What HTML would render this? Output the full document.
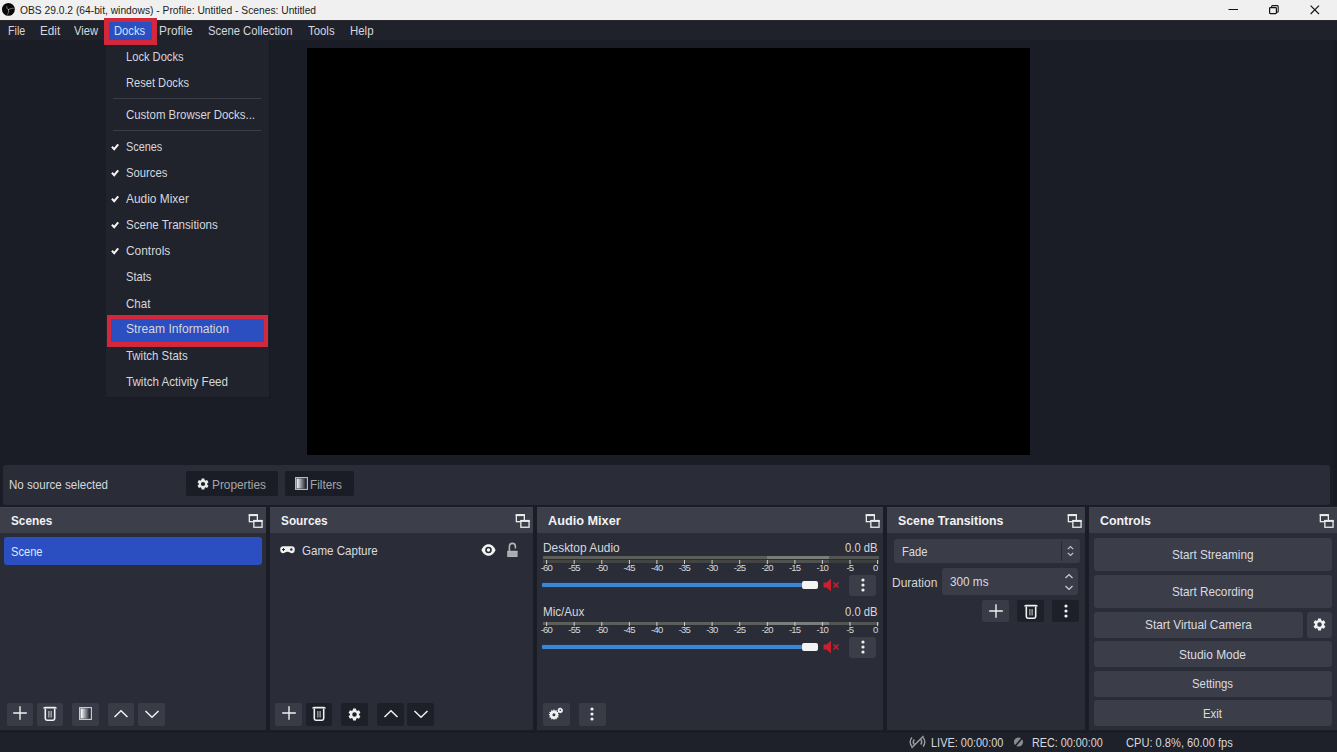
<!DOCTYPE html>
<html><head><meta charset="utf-8">
<style>
*{margin:0;padding:0;box-sizing:border-box}
html,body{width:1337px;height:752px;overflow:hidden;background:#1a1c26;font-family:"Liberation Sans",sans-serif}
.a{position:absolute}
.tx{position:absolute;white-space:nowrap;transform-origin:0 50%}
svg{position:absolute;overflow:visible}
</style></head><body>
<div class="a" style="left:0px;top:0px;width:1337px;height:20px;background:#f0f0f0;"></div>
<div class="a" style="left:0px;top:20px;width:1337px;height:20px;background:#20222b;"></div>
<div class="a" style="left:0px;top:19.5px;width:1337px;height:1px;background:#2a2a2e;"></div>
<div class="a" style="left:307px;top:48px;width:723px;height:406.5px;background:#000;"></div>
<div class="a" style="left:1333px;top:41px;width:4px;height:464px;background:#181a23;"></div>
<div class="a" style="left:3px;top:465px;width:1327px;height:39.5px;background:#2a2d38;border-radius:3px"></div>
<div class="a" style="left:0px;top:507px;width:266px;height:223px;background:#2a2d37;"></div>
<div class="a" style="left:0px;top:507px;width:266px;height:26px;background:#3c3f4a;border-top:1px solid #43454f"></div>
<div class="a" style="left:270px;top:507px;width:263px;height:223px;background:#2a2d37;"></div>
<div class="a" style="left:270px;top:507px;width:263px;height:26px;background:#3c3f4a;border-top:1px solid #43454f"></div>
<div class="a" style="left:537px;top:507px;width:346px;height:223px;background:#2a2d37;"></div>
<div class="a" style="left:537px;top:507px;width:346px;height:26px;background:#3c3f4a;border-top:1px solid #43454f"></div>
<div class="a" style="left:887px;top:507px;width:198px;height:223px;background:#2a2d37;"></div>
<div class="a" style="left:887px;top:507px;width:198px;height:26px;background:#3c3f4a;border-top:1px solid #43454f"></div>
<div class="a" style="left:1089px;top:507px;width:248px;height:223px;background:#2a2d37;"></div>
<div class="a" style="left:1089px;top:507px;width:248px;height:26px;background:#3c3f4a;border-top:1px solid #43454f"></div>
<div class="a" style="left:0px;top:733px;width:1337px;height:19px;background:#1f212a;"></div>
<svg style="left:2px;top:3px" width="14" height="14" viewBox="0 0 14 14"><circle cx="6.4" cy="6.4" r="6.4" fill="#080808"/><path d="M6.5 6.6C5.2 6 4.6 4.8 4.8 3.2M6.5 6.6C8.3 5.5 10 5.2 11.8 5.3M6.5 6.6C6.9 8.4 6.4 10.2 5.2 11.6" fill="none" stroke="#8a8a8a" stroke-width="0.9"/><circle cx="6.5" cy="6.6" r="0.7" fill="#bbb"/></svg>
<svg style="left:1228px;top:5px" width="12" height="10"><path d="M0.5 4.5H10" stroke="#111" stroke-width="1"/></svg>
<svg style="left:1269px;top:5px" width="12" height="10"><path d="M2.6 2.3V1.6a1 1 0 0 1 1-1H8.2a1 1 0 0 1 1 1V6.2a1 1 0 0 1-1 1H7.6" fill="none" stroke="#111" stroke-width="1.1"/><rect x="0.6" y="2.6" width="6.8" height="6" rx="0.8" fill="none" stroke="#111" stroke-width="1.2"/></svg>
<svg style="left:1310px;top:5px" width="10" height="10"><path d="M0.6 0.6L9 9M9 0.6L0.6 9" stroke="#151515" stroke-width="1.15"/></svg>
<div class="a" style="left:106px;top:40px;width:164px;height:358px;background:#17191f;"></div>
<div class="a" style="left:106px;top:40px;width:163px;height:357px;background:#20222c;"></div>
<div class="a" style="left:104px;top:18px;width:53px;height:27px;background:#d3283c;"></div>
<div class="a" style="left:109px;top:22px;width:43px;height:18px;background:#2b4ec0;"></div>
<div class="a" style="left:113px;top:98px;width:148px;height:1px;background:#3b3e49;"></div>
<div class="a" style="left:113px;top:130px;width:148px;height:1px;background:#3b3e49;"></div>
<div class="a" style="left:107px;top:315px;width:161px;height:32px;background:#d3283c;"></div>
<div class="a" style="left:111px;top:319px;width:153px;height:23px;background:#2b4ec0;"></div>
<svg style="left:111px;top:142.7px" width="9" height="8"><path d="M0.9 3.8L3.2 6.2L7.2 1.3" fill="none" stroke="#f2f2f2" stroke-width="2.1"/></svg>
<svg style="left:111px;top:168.7px" width="9" height="8"><path d="M0.9 3.8L3.2 6.2L7.2 1.3" fill="none" stroke="#f2f2f2" stroke-width="2.1"/></svg>
<svg style="left:111px;top:194.7px" width="9" height="8"><path d="M0.9 3.8L3.2 6.2L7.2 1.3" fill="none" stroke="#f2f2f2" stroke-width="2.1"/></svg>
<svg style="left:111px;top:220.7px" width="9" height="8"><path d="M0.9 3.8L3.2 6.2L7.2 1.3" fill="none" stroke="#f2f2f2" stroke-width="2.1"/></svg>
<svg style="left:111px;top:246.8px" width="9" height="8"><path d="M0.9 3.8L3.2 6.2L7.2 1.3" fill="none" stroke="#f2f2f2" stroke-width="2.1"/></svg>
<div class="a" style="left:186px;top:471px;width:92px;height:25px;background:#1b1d26;border-radius:2px"></div>
<div class="a" style="left:285px;top:471px;width:68.5px;height:25px;background:#1b1d26;border-radius:2px"></div>
<svg style="left:196px;top:477px" width="14" height="14" viewBox="0 0 24 24"><path fill="#e8e8e8" d="M19.14 12.94c.04-.3.06-.61.06-.94s-.02-.64-.07-.94l2.03-1.58a.49.49 0 0 0 .12-.61l-1.92-3.32a.49.49 0 0 0-.59-.22l-2.39.96c-.5-.38-1.03-.7-1.62-.94l-.36-2.54a.48.48 0 0 0-.48-.41h-3.84c-.24 0-.43.17-.47.41l-.36 2.54c-.59.24-1.13.57-1.62.94l-2.39-.96a.49.49 0 0 0-.59.22L2.74 8.87c-.12.21-.08.47.12.61l2.03 1.58c-.05.3-.09.63-.09.94s.02.64.07.94l-2.03 1.58a.49.49 0 0 0-.12.61l1.92 3.32c.12.22.37.29.59.22l2.39-.96c.5.38 1.03.7 1.62.94l.36 2.54c.05.24.24.41.48.41h3.84c.24 0 .44-.17.47-.41l.36-2.54c.59-.24 1.13-.56 1.62-.94l2.39.96c.22.08.47 0 .59-.22l1.92-3.32c.12-.22.07-.47-.12-.61l-2.01-1.58zM12 15.6A3.6 3.6 0 1 1 12 8.4a3.6 3.6 0 0 1 0 7.2z"/></svg>
<svg style="left:295px;top:477px" width="13" height="13"><defs><linearGradient id="fg" x1="0" x2="1"><stop offset="0.1" stop-color="#e4e4ec"/><stop offset="0.9" stop-color="#2a2c34"/></linearGradient></defs><rect x="1.5" y="1.5" width="10" height="10" fill="url(#fg)"/><rect x="0.6" y="0.6" width="11.8" height="11.8" fill="none" stroke="#bfc0c8" stroke-width="1.1"/></svg>
<svg style="left:248px;top:513px" width="16" height="16" viewBox="0 0 16 16"><rect x="1.35" y="1.75" width="8" height="6.9" fill="none" stroke="#ececec" stroke-width="1.3"/><path d="M0.7 2.3H10" stroke="#ececec" stroke-width="1.6"/><rect x="5.85" y="7.55" width="8.2" height="6.7" fill="#3c3f4a" stroke="#ececec" stroke-width="1.3"/><path d="M5.2 8.1H14.7" stroke="#ececec" stroke-width="1.6"/></svg>
<svg style="left:515px;top:513px" width="16" height="16" viewBox="0 0 16 16"><rect x="1.35" y="1.75" width="8" height="6.9" fill="none" stroke="#ececec" stroke-width="1.3"/><path d="M0.7 2.3H10" stroke="#ececec" stroke-width="1.6"/><rect x="5.85" y="7.55" width="8.2" height="6.7" fill="#3c3f4a" stroke="#ececec" stroke-width="1.3"/><path d="M5.2 8.1H14.7" stroke="#ececec" stroke-width="1.6"/></svg>
<svg style="left:865px;top:513px" width="16" height="16" viewBox="0 0 16 16"><rect x="1.35" y="1.75" width="8" height="6.9" fill="none" stroke="#ececec" stroke-width="1.3"/><path d="M0.7 2.3H10" stroke="#ececec" stroke-width="1.6"/><rect x="5.85" y="7.55" width="8.2" height="6.7" fill="#3c3f4a" stroke="#ececec" stroke-width="1.3"/><path d="M5.2 8.1H14.7" stroke="#ececec" stroke-width="1.6"/></svg>
<svg style="left:1067px;top:513px" width="16" height="16" viewBox="0 0 16 16"><rect x="1.35" y="1.75" width="8" height="6.9" fill="none" stroke="#ececec" stroke-width="1.3"/><path d="M0.7 2.3H10" stroke="#ececec" stroke-width="1.6"/><rect x="5.85" y="7.55" width="8.2" height="6.7" fill="#3c3f4a" stroke="#ececec" stroke-width="1.3"/><path d="M5.2 8.1H14.7" stroke="#ececec" stroke-width="1.6"/></svg>
<svg style="left:1319px;top:513px" width="16" height="16" viewBox="0 0 16 16"><rect x="1.35" y="1.75" width="8" height="6.9" fill="none" stroke="#ececec" stroke-width="1.3"/><path d="M0.7 2.3H10" stroke="#ececec" stroke-width="1.6"/><rect x="5.85" y="7.55" width="8.2" height="6.7" fill="#3c3f4a" stroke="#ececec" stroke-width="1.3"/><path d="M5.2 8.1H14.7" stroke="#ececec" stroke-width="1.6"/></svg>
<div class="a" style="left:4px;top:537px;width:258px;height:28px;background:#2b4ec0;border-radius:3px"></div>
<div class="a" style="left:7px;top:703px;width:26px;height:23px;background:#393c47;border-radius:2px"></div>
<svg style="left:12px;top:705px" width="16" height="16"><path d="M8 1.2V14.8M1.2 8H14.8" stroke="#f0f0f0" stroke-width="1.4"/></svg>
<div class="a" style="left:37px;top:703px;width:26px;height:23px;background:#393c47;border-radius:2px"></div>
<svg style="left:42px;top:706px" width="16" height="16"><path d="M1.9 2.6Q1.9 1.6 3 1.6H13Q14.1 1.6 14.1 2.6" fill="none" stroke="#f0f0f0" stroke-width="1.6"/><path d="M3.3 2.4V12.6a1.6 1.6 0 0 0 1.6 1.6H11.1a1.6 1.6 0 0 0 1.6-1.6V2.4" fill="none" stroke="#f0f0f0" stroke-width="1.6"/><path d="M6.9 5V11.5M9.1 5V11.5" stroke="#f0f0f0" stroke-width="1" opacity="0.85"/></svg>
<div class="a" style="left:72px;top:703px;width:27px;height:23px;background:#393c47;border-radius:2px"></div>
<svg style="left:79.0px;top:707px" width="14" height="14"><defs><linearGradient id="fg2" x1="0" x2="1"><stop offset="0.1" stop-color="#f0f0f4"/><stop offset="0.9" stop-color="#2a2c34"/></linearGradient></defs><rect x="1.5" y="1.5" width="10" height="10" fill="url(#fg2)"/><rect x="0.6" y="0.6" width="11.8" height="11.8" fill="none" stroke="#d0d0d6" stroke-width="1.1"/></svg>
<div class="a" style="left:108px;top:703px;width:26px;height:23px;background:#393c47;border-radius:2px"></div>
<svg style="left:113px;top:706px" width="16" height="16"><path d="M1.5 11L8 4.8L14.5 11" fill="none" stroke="#f0f0f0" stroke-width="1.5"/></svg>
<div class="a" style="left:138px;top:703px;width:27px;height:23px;background:#393c47;border-radius:2px"></div>
<svg style="left:143.5px;top:706px" width="16" height="16"><path d="M1.5 5L8 11.2L14.5 5" fill="none" stroke="#f0f0f0" stroke-width="1.5"/></svg>
<div class="a" style="left:275px;top:703px;width:27px;height:23px;background:#393c47;border-radius:2px"></div>
<svg style="left:280.5px;top:705px" width="16" height="16"><path d="M8 1.2V14.8M1.2 8H14.8" stroke="#f0f0f0" stroke-width="1.4"/></svg>
<div class="a" style="left:306px;top:703px;width:26px;height:23px;background:#1e2029;border-radius:2px"></div>
<svg style="left:311px;top:706px" width="16" height="16"><path d="M1.9 2.6Q1.9 1.6 3 1.6H13Q14.1 1.6 14.1 2.6" fill="none" stroke="#f0f0f0" stroke-width="1.6"/><path d="M3.3 2.4V12.6a1.6 1.6 0 0 0 1.6 1.6H11.1a1.6 1.6 0 0 0 1.6-1.6V2.4" fill="none" stroke="#f0f0f0" stroke-width="1.6"/><path d="M6.9 5V11.5M9.1 5V11.5" stroke="#f0f0f0" stroke-width="1" opacity="0.85"/></svg>
<div class="a" style="left:341px;top:703px;width:27px;height:23px;background:#1e2029;border-radius:2px"></div>
<svg style="left:347.0px;top:706.5px" width="15" height="15" viewBox="0 0 24 24"><path fill="#f0f0f0" d="M19.14 12.94c.04-.3.06-.61.06-.94s-.02-.64-.07-.94l2.03-1.58a.49.49 0 0 0 .12-.61l-1.92-3.32a.49.49 0 0 0-.59-.22l-2.39.96c-.5-.38-1.03-.7-1.62-.94l-.36-2.54a.48.48 0 0 0-.48-.41h-3.84c-.24 0-.43.17-.47.41l-.36 2.54c-.59.24-1.130.57-1.62.94l-2.39-.96a.49.49 0 0 0-.59.22L2.74 8.87c-.12.21-.08.47.12.61l2.03 1.58c-.05.3-.09.63-.09.94s.02.64.07.94l-2.03 1.58a.49.49 0 0 0-.12.61l1.920 3.32c.12.22.37.29.59.22l2.39-.96c.5.38 1.03.7 1.62.94l.36 2.54c.05.24.24.41.48.41h3.84c.24 0 .44-.17.47-.41l.36-2.54c.59-.24 1.13-.56 1.62-.94l2.39.96c.22.08.47 0 .59-.22l1.92-3.32c.12-.22.07-.47-.12-.61l-2.010-1.58zM12 15.6A3.6 3.6 0 1 1 12 8.4a3.6 3.6 0 0 1 0 7.2z"/></svg>
<div class="a" style="left:377px;top:703px;width:27px;height:23px;background:#1e2029;border-radius:2px"></div>
<svg style="left:382.5px;top:706px" width="16" height="16"><path d="M1.5 11L8 4.8L14.5 11" fill="none" stroke="#f0f0f0" stroke-width="1.5"/></svg>
<div class="a" style="left:407px;top:703px;width:27px;height:23px;background:#1e2029;border-radius:2px"></div>
<svg style="left:412.5px;top:706px" width="16" height="16"><path d="M1.5 5L8 11.2L14.5 5" fill="none" stroke="#f0f0f0" stroke-width="1.5"/></svg>
<svg style="left:280px;top:546px" width="15" height="8" viewBox="0 0 15 8"><path d="M3.4 0.2H11.6A3.3 3.3 0 0 1 14.8 3.8C14.8 6 13.6 7.3 12 7.3C10.4 7.3 9.6 5.8 7.5 5.8S4.6 7.3 3 7.3C1.4 7.3 0.2 6 0.2 3.8A3.3 3.3 0 0 1 3.4 0.2Z" fill="#f0f0f0"/><path d="M2 3.5H5M3.5 2V5" stroke="#292c36" stroke-width="1"/><circle cx="11.3" cy="3.5" r="1.2" fill="#292c36"/></svg>
<svg style="left:480.5px;top:544px" width="15" height="12" viewBox="0 0 15 12"><path d="M0.4 6C2.4 1.6 5 0.3 7.5 0.3S12.6 1.6 14.6 6C12.6 10.4 10 11.7 7.5 11.7S2.4 10.4 0.4 6Z" fill="#f4f4f4"/><circle cx="7.5" cy="6" r="3.3" fill="#292c36"/><circle cx="7.5" cy="6" r="1.7" fill="#f4f4f4"/></svg>
<svg style="left:507px;top:542px" width="12" height="16" viewBox="0 0 12 16"><path d="M2.4 9V4.4A3 3 0 0 1 8.4 4.4V6.6" fill="none" stroke="#b4b4b8" stroke-width="1.6"/><rect x="0.2" y="8.7" width="10.4" height="6.3" rx="0.6" fill="#b4b4b8"/><path d="M0.5 11.2H10.3M0.5 13H10.3" stroke="#9a9a9e" stroke-width="0.6"/></svg>
<div class="a" style="left:543px;top:556px;width:224.0px;height:3px;background:#5c5e5a;"></div>
<div class="a" style="left:767.0px;top:556px;width:61.60000000000002px;height:3px;background:#7b7d78;"></div>
<div class="a" style="left:828.6px;top:556px;width:50.39999999999998px;height:3px;background:#535553;"></div>
<div class="a" style="left:543px;top:560px;width:224.0px;height:3px;background:#434542;"></div>
<div class="a" style="left:767.0px;top:560px;width:61.60000000000002px;height:3px;background:#50524f;"></div>
<div class="a" style="left:828.6px;top:560px;width:50.39999999999998px;height:3px;background:#3c3e3e;"></div>
<svg style="left:543px;top:560px" width="342" height="6"><path d="M3.6 0V4" stroke="#d0d0d0" stroke-width="1"/><path d="M31.2 0V4" stroke="#d0d0d0" stroke-width="1"/><path d="M58.8 0V4" stroke="#d0d0d0" stroke-width="1"/><path d="M86.4 0V4" stroke="#d0d0d0" stroke-width="1"/><path d="M113.9 0V4" stroke="#d0d0d0" stroke-width="1"/><path d="M141.5 0V4" stroke="#d0d0d0" stroke-width="1"/><path d="M169.1 0V4" stroke="#d0d0d0" stroke-width="1"/><path d="M196.7 0V4" stroke="#d0d0d0" stroke-width="1"/><path d="M224.3 0V4" stroke="#d0d0d0" stroke-width="1"/><path d="M251.9 0V4" stroke="#d0d0d0" stroke-width="1"/><path d="M279.4 0V4" stroke="#d0d0d0" stroke-width="1"/><path d="M307.0 0V4" stroke="#d0d0d0" stroke-width="1"/><path d="M334.6 0V4" stroke="#d0d0d0" stroke-width="1"/></svg>
<div class="a" style="left:542px;top:583px;width:260px;height:4px;background:#3f86d2;box-shadow:0 0 0 1px #1f3550;border-radius:1px"></div>
<div class="a" style="left:802px;top:581px;width:16px;height:8px;background:#f4f4f4;border-radius:2px"></div>
<svg style="left:823px;top:578px" width="17" height="14" viewBox="0 0 17 14"><path d="M0.5 4.5H3.5L8 0.8V13.2L3.5 9.5H0.5Z" fill="#c8202e"/><path d="M10.5 4.5L15.5 9.5M15.5 4.5L10.5 9.5" stroke="#c8202e" stroke-width="1.5"/></svg>
<div class="a" style="left:849px;top:575px;width:27px;height:21px;background:#3b3e49;border-radius:3px"></div>
<svg style="left:859.7px;top:576.6px" width="6" height="16"><circle cx="3" cy="3" r="1.6" fill="#f0f0f0"/><circle cx="3" cy="8" r="1.6" fill="#f0f0f0"/><circle cx="3" cy="13" r="1.6" fill="#f0f0f0"/></svg>
<div class="a" style="left:543px;top:621.7px;width:224.0px;height:3px;background:#5c5e5a;"></div>
<div class="a" style="left:767.0px;top:621.7px;width:61.60000000000002px;height:3px;background:#7b7d78;"></div>
<div class="a" style="left:828.6px;top:621.7px;width:50.39999999999998px;height:3px;background:#535553;"></div>
<svg style="left:543px;top:622px" width="342" height="6"><path d="M3.6 0V4" stroke="#d0d0d0" stroke-width="1"/><path d="M31.2 0V4" stroke="#d0d0d0" stroke-width="1"/><path d="M58.8 0V4" stroke="#d0d0d0" stroke-width="1"/><path d="M86.4 0V4" stroke="#d0d0d0" stroke-width="1"/><path d="M113.9 0V4" stroke="#d0d0d0" stroke-width="1"/><path d="M141.5 0V4" stroke="#d0d0d0" stroke-width="1"/><path d="M169.1 0V4" stroke="#d0d0d0" stroke-width="1"/><path d="M196.7 0V4" stroke="#d0d0d0" stroke-width="1"/><path d="M224.3 0V4" stroke="#d0d0d0" stroke-width="1"/><path d="M251.9 0V4" stroke="#d0d0d0" stroke-width="1"/><path d="M279.4 0V4" stroke="#d0d0d0" stroke-width="1"/><path d="M307.0 0V4" stroke="#d0d0d0" stroke-width="1"/><path d="M334.6 0V4" stroke="#d0d0d0" stroke-width="1"/></svg>
<div class="a" style="left:542px;top:645px;width:260px;height:4px;background:#3f86d2;box-shadow:0 0 0 1px #1f3550;border-radius:1px"></div>
<div class="a" style="left:802px;top:643px;width:16px;height:8px;background:#f4f4f4;border-radius:2px"></div>
<svg style="left:823px;top:640px" width="17" height="14" viewBox="0 0 17 14"><path d="M0.5 4.5H3.5L8 0.8V13.2L3.5 9.5H0.5Z" fill="#c8202e"/><path d="M10.5 4.5L15.5 9.5M15.5 4.5L10.5 9.5" stroke="#c8202e" stroke-width="1.5"/></svg>
<div class="a" style="left:849px;top:637px;width:27px;height:21px;background:#3b3e49;border-radius:3px"></div>
<svg style="left:859.7px;top:638.6px" width="6" height="16"><circle cx="3" cy="3" r="1.6" fill="#f0f0f0"/><circle cx="3" cy="8" r="1.6" fill="#f0f0f0"/><circle cx="3" cy="13" r="1.6" fill="#f0f0f0"/></svg>
<div class="a" style="left:543px;top:703px;width:27px;height:23px;background:#393c47;border-radius:2px"></div>
<svg style="left:548px;top:706px" width="17" height="17" viewBox="0 0 17 17"><g fill="#f0f0f0"><path d="M6.5 4.6l.9.2.5-.8 1 .6-.3.9.6.6.9-.3.6 1-.8.5.2.9h.9v1.1h-.9l-.2.9.8.5-.6 1-.9-.3-.6.6.3.9-1 .6-.5-.8-.9.2v.9H5.4v-.9l-.9-.2-.5.8-1-.6.3-.9-.6-.6-.9.3-.6-1 .8-.5-.2-.9H.9V8.1h.9l.2-.9-.8-.5.6-1 .9.3.6-.6-.3-.9 1-.6.5.8.9-.2v-.9h1.1z"/></g><circle cx="5.95" cy="8.65" r="1.5" fill="#363a45"/><g fill="#f0f0f0"><path d="M12.6 2.2l.5.1.3-.4.6.3-.2.5.3.3.5-.2.3.6-.4.3.1.5h.5v.6h-.5l-.1.5.4.3-.3.6-.5-.2-.3.3.2.5-.6.3-.3-.4-.5.1v.5H12v-.5l-.5-.1-.3.4-.6-.3.2-.5-.3-.3-.5.2-.3-.6.4-.3-.1-.5h-.5V4h.5l.1-.5-.4-.3.3-.6.5.2.3-.3-.2-.5.6-.3.3.4.5-.1v-.5h.6z"/></g><circle cx="12.3" cy="4.3" r="0.8" fill="#363a45"/></svg>
<div class="a" style="left:579px;top:703px;width:27px;height:23px;background:#393c47;border-radius:2px"></div>
<svg style="left:588.7px;top:706px" width="6" height="16"><circle cx="3" cy="3" r="1.6" fill="#f0f0f0"/><circle cx="3" cy="8" r="1.6" fill="#f0f0f0"/><circle cx="3" cy="13" r="1.6" fill="#f0f0f0"/></svg>
<div class="a" style="left:894px;top:539px;width:186px;height:24px;background:#3a3d48;border-radius:3px"></div>
<div class="a" style="left:1061px;top:541px;width:1px;height:20px;background:#272a33;"></div>
<svg style="left:1066px;top:545px" width="9" height="12"><path d="M1.8 4.2L4.5 1.5L7.2 4.2M1.8 7.8L4.5 10.5L7.2 7.8" fill="none" stroke="#c4c4c8" stroke-width="1.2"/></svg>
<div class="a" style="left:942px;top:568px;width:136px;height:27px;background:#3a3d48;border-radius:3px"></div>
<svg style="left:1064px;top:572px" width="10" height="20"><path d="M1.5 6L5 2.5L8.5 6M1.5 14L5 17.5L8.5 14" fill="none" stroke="#d0d0d4" stroke-width="1.2"/></svg>
<div class="a" style="left:982px;top:600px;width:27px;height:22px;background:#393c47;border-radius:2px"></div>
<svg style="left:987.5px;top:603px" width="16" height="16"><path d="M8 1.2V14.8M1.2 8H14.8" stroke="#f0f0f0" stroke-width="1.4"/></svg>
<div class="a" style="left:1017px;top:600px;width:27px;height:22px;background:#1e2029;border-radius:2px"></div>
<svg style="left:1022.5px;top:603.8px" width="16" height="16"><path d="M1.9 2.6Q1.9 1.6 3 1.6H13Q14.1 1.6 14.1 2.6" fill="none" stroke="#f0f0f0" stroke-width="1.6"/><path d="M3.3 2.4V12.6a1.6 1.6 0 0 0 1.6 1.6H11.1a1.6 1.6 0 0 0 1.6-1.6V2.4" fill="none" stroke="#f0f0f0" stroke-width="1.6"/><path d="M6.9 5V11.5M9.1 5V11.5" stroke="#f0f0f0" stroke-width="1" opacity="0.85"/></svg>
<div class="a" style="left:1052px;top:600px;width:27px;height:22px;background:#1e2029;border-radius:2px"></div>
<svg style="left:1062.5px;top:603px" width="6" height="16"><circle cx="3" cy="3" r="1.6" fill="#f0f0f0"/><circle cx="3" cy="8" r="1.6" fill="#f0f0f0"/><circle cx="3" cy="13" r="1.6" fill="#f0f0f0"/></svg>
<div class="a" style="left:1093.5px;top:537.5px;width:238.5px;height:33.5px;background:#3b3e49;border-radius:3px"></div>
<div class="a" style="left:1093.5px;top:574.5px;width:238.5px;height:33.5px;background:#3b3e49;border-radius:3px"></div>
<div class="a" style="left:1093.5px;top:641px;width:238.5px;height:26px;background:#3b3e49;border-radius:3px"></div>
<div class="a" style="left:1093.5px;top:670.5px;width:238.5px;height:26px;background:#3b3e49;border-radius:3px"></div>
<div class="a" style="left:1093.5px;top:700px;width:238.5px;height:26px;background:#3b3e49;border-radius:3px"></div>
<div class="a" style="left:1093.5px;top:611.5px;width:209.5px;height:26px;background:#3b3e49;border-radius:3px"></div>
<div class="a" style="left:1306.5px;top:611.5px;width:25.5px;height:26px;background:#3b3e49;border-radius:3px"></div>
<svg style="left:1312.0px;top:617.0px" width="15" height="15" viewBox="0 0 24 24"><path fill="#f0f0f0" d="M19.14 12.94c.04-.3.06-.61.06-.94s-.02-.64-.07-.94l2.03-1.58a.49.49 0 0 0 .12-.61l-1.92-3.32a.49.49 0 0 0-.59-.22l-2.39.96c-.5-.38-1.03-.7-1.62-.94l-.36-2.54a.48.48 0 0 0-.48-.41h-3.84c-.24 0-.43.17-.47.41l-.36 2.54c-.59.24-1.130.57-1.62.94l-2.39-.96a.49.49 0 0 0-.59.22L2.74 8.87c-.12.21-.08.47.12.61l2.03 1.58c-.05.3-.09.63-.09.94s.02.64.07.94l-2.03 1.58a.49.49 0 0 0-.12.61l1.920 3.32c.12.22.37.29.59.22l2.39-.96c.5.38 1.03.7 1.62.94l.36 2.54c.05.24.24.41.48.41h3.84c.24 0 .44-.17.47-.41l.36-2.54c.59-.24 1.13-.56 1.62-.94l2.39.96c.22.08.47 0 .59-.22l1.92-3.32c.12-.22.07-.47-.12-.61l-2.010-1.58zM12 15.6A3.6 3.6 0 1 1 12 8.4a3.6 3.6 0 0 1 0 7.2z"/></svg>
<svg style="left:908px;top:735px" width="19" height="14" viewBox="0 0 19 14"><g fill="none" stroke="#9c9ca2" stroke-width="1.4"><path d="M4 2.5A6.5 6.5 0 0 0 4 11.5M15 2.5A6.5 6.5 0 0 1 15 11.5M6.3 4.5A3.8 3.8 0 0 0 6.3 9.5M12.7 4.5A3.8 3.8 0 0 1 12.7 9.5"/><path d="M3.5 13L15.5 1"/></g></svg>
<svg style="left:1013px;top:736px" width="11" height="12" viewBox="0 0 11 12"><circle cx="5.5" cy="6" r="4.6" fill="#8a8a90"/><path d="M1 11.5L10.5 0.5" stroke="#1c1e28" stroke-width="1.6"/></svg>
<span class="tx" id="t0" style="left:20.0px;top:3.89px;font-size:11px;line-height:13px;color:#1b1b1b;transform:scaleX(0.933);">OBS 29.0.2 (64-bit, windows) - Profile: Untitled - Scenes: Untitled</span>
<span class="tx" id="t1" style="left:7.5px;top:23.00px;font-size:13px;line-height:15px;color:#d6d7de;transform:scaleX(0.821);">File</span>
<span class="tx" id="t2" style="left:39.6px;top:23.00px;font-size:13px;line-height:15px;color:#d6d7de;transform:scaleX(0.902);">Edit</span>
<span class="tx" id="t3" style="left:74.0px;top:23.00px;font-size:13px;line-height:15px;color:#d6d7de;transform:scaleX(0.859);">View</span>
<span class="tx" id="t4" style="left:113.7px;top:23.00px;font-size:13px;line-height:15px;color:#cfe0ff;transform:scaleX(0.861);">Docks</span>
<span class="tx" id="t5" style="left:159.3px;top:23.00px;font-size:13px;line-height:15px;color:#d6d7de;transform:scaleX(0.914);">Profile</span>
<span class="tx" id="t6" style="left:207.8px;top:23.00px;font-size:13px;line-height:15px;color:#d6d7de;transform:scaleX(0.867);">Scene Collection</span>
<span class="tx" id="t7" style="left:307.7px;top:23.00px;font-size:13px;line-height:15px;color:#d6d7de;transform:scaleX(0.876);">Tools</span>
<span class="tx" id="t8" style="left:350.0px;top:23.00px;font-size:13px;line-height:15px;color:#d6d7de;transform:scaleX(0.879);">Help</span>
<span class="tx" id="t9" style="left:126.0px;top:49.10px;font-size:13px;line-height:15px;color:#d6d7dc;transform:scaleX(0.856);">Lock Docks</span>
<span class="tx" id="t10" style="left:126.0px;top:74.60px;font-size:13px;line-height:15px;color:#d6d7dc;transform:scaleX(0.855);">Reset Docks</span>
<span class="tx" id="t11" style="left:126.0px;top:107.30px;font-size:13px;line-height:15px;color:#d6d7dc;transform:scaleX(0.880);">Custom Browser Docks...</span>
<span class="tx" id="t12" style="left:126.0px;top:138.90px;font-size:13px;line-height:15px;color:#d6d7dc;transform:scaleX(0.837);">Scenes</span>
<span class="tx" id="t13" style="left:126.0px;top:164.90px;font-size:13px;line-height:15px;color:#d6d7dc;transform:scaleX(0.866);">Sources</span>
<span class="tx" id="t14" style="left:126.0px;top:190.90px;font-size:13px;line-height:15px;color:#d6d7dc;transform:scaleX(0.916);">Audio Mixer</span>
<span class="tx" id="t15" style="left:126.0px;top:216.90px;font-size:13px;line-height:15px;color:#d6d7dc;transform:scaleX(0.888);">Scene Transitions</span>
<span class="tx" id="t16" style="left:126.0px;top:243.00px;font-size:13px;line-height:15px;color:#d6d7dc;transform:scaleX(0.915);">Controls</span>
<span class="tx" id="t17" style="left:126.0px;top:269.00px;font-size:13px;line-height:15px;color:#d6d7dc;transform:scaleX(0.857);">Stats</span>
<span class="tx" id="t18" style="left:126.0px;top:295.50px;font-size:13px;line-height:15px;color:#d6d7dc;transform:scaleX(0.888);">Chat</span>
<span class="tx" id="t19" style="left:126.0px;top:321.40px;font-size:13px;line-height:15px;color:#d6d7dc;transform:scaleX(0.932);">Stream Information</span>
<span class="tx" id="t20" style="left:126.0px;top:347.60px;font-size:13px;line-height:15px;color:#d6d7dc;transform:scaleX(0.880);">Twitch Stats</span>
<span class="tx" id="t21" style="left:126.0px;top:373.60px;font-size:13px;line-height:15px;color:#d6d7dc;transform:scaleX(0.894);">Twitch Activity Feed</span>
<span class="tx" id="t22" style="left:9.0px;top:477.00px;font-size:13px;line-height:15px;color:#d6d7dc;transform:scaleX(0.890);">No source selected</span>
<span class="tx" id="t23" style="left:212.0px;top:477.00px;font-size:13px;line-height:15px;color:#a4a5ab;transform:scaleX(0.911);">Properties</span>
<span class="tx" id="t24" style="left:310.0px;top:477.00px;font-size:13px;line-height:15px;color:#a4a5ab;transform:scaleX(0.904);">Filters</span>
<span class="tx" id="t25" style="left:10.5px;top:513.00px;font-size:13px;line-height:15px;color:#f2f2f4;font-weight:700;transform:scaleX(0.907);">Scenes</span>
<span class="tx" id="t26" style="left:280.5px;top:513.00px;font-size:13px;line-height:15px;color:#f2f2f4;font-weight:700;transform:scaleX(0.910);">Sources</span>
<span class="tx" id="t27" style="left:547.5px;top:513.00px;font-size:13px;line-height:15px;color:#f2f2f4;font-weight:700;transform:scaleX(0.977);">Audio Mixer</span>
<span class="tx" id="t28" style="left:897.5px;top:513.00px;font-size:13px;line-height:15px;color:#f2f2f4;font-weight:700;transform:scaleX(0.948);">Scene Transitions</span>
<span class="tx" id="t29" style="left:1099.5px;top:513.00px;font-size:13px;line-height:15px;color:#f2f2f4;font-weight:700;transform:scaleX(0.954);">Controls</span>
<span class="tx" id="t30" style="left:11.0px;top:544.00px;font-size:13px;line-height:15px;color:#dfe6ff;transform:scaleX(0.854);">Scene</span>
<span class="tx" id="t31" style="left:301.5px;top:542.70px;font-size:13px;line-height:15px;color:#dadbe0;transform:scaleX(0.889);">Game Capture</span>
<span class="tx" id="t32" style="left:542.5px;top:540.00px;font-size:13px;line-height:15px;color:#d6d7dc;transform:scaleX(0.914);">Desktop Audio</span>
<span class="tx" id="t33" style="left:845.0px;top:540.00px;font-size:13px;line-height:15px;color:#d6d7dc;transform:scaleX(0.867);">0.0 dB</span>
<span class="tx" id="t34" style="left:540.7px;top:562.16px;font-size:9.5px;line-height:11.5px;color:#d8d8d8;letter-spacing:-0.8px;">-60</span>
<span class="tx" id="t35" style="left:568.3px;top:562.16px;font-size:9.5px;line-height:11.5px;color:#d8d8d8;letter-spacing:-0.8px;">-55</span>
<span class="tx" id="t36" style="left:595.9px;top:562.16px;font-size:9.5px;line-height:11.5px;color:#d8d8d8;letter-spacing:-0.8px;">-50</span>
<span class="tx" id="t37" style="left:623.5px;top:562.16px;font-size:9.5px;line-height:11.5px;color:#d8d8d8;letter-spacing:-0.8px;">-45</span>
<span class="tx" id="t38" style="left:651.1px;top:562.16px;font-size:9.5px;line-height:11.5px;color:#d8d8d8;letter-spacing:-0.8px;">-40</span>
<span class="tx" id="t39" style="left:678.7px;top:562.16px;font-size:9.5px;line-height:11.5px;color:#d8d8d8;letter-spacing:-0.8px;">-35</span>
<span class="tx" id="t40" style="left:706.2px;top:562.16px;font-size:9.5px;line-height:11.5px;color:#d8d8d8;letter-spacing:-0.8px;">-30</span>
<span class="tx" id="t41" style="left:733.8px;top:562.16px;font-size:9.5px;line-height:11.5px;color:#d8d8d8;letter-spacing:-0.8px;">-25</span>
<span class="tx" id="t42" style="left:761.4px;top:562.16px;font-size:9.5px;line-height:11.5px;color:#d8d8d8;letter-spacing:-0.8px;">-20</span>
<span class="tx" id="t43" style="left:789.0px;top:562.16px;font-size:9.5px;line-height:11.5px;color:#d8d8d8;letter-spacing:-0.8px;">-15</span>
<span class="tx" id="t44" style="left:816.6px;top:562.16px;font-size:9.5px;line-height:11.5px;color:#d8d8d8;letter-spacing:-0.8px;">-10</span>
<span class="tx" id="t45" style="left:846.4px;top:562.16px;font-size:9.5px;line-height:11.5px;color:#d8d8d8;letter-spacing:-0.8px;">-5</span>
<span class="tx" id="t46" style="left:872.9px;top:562.16px;font-size:9.5px;line-height:11.5px;color:#d8d8d8;letter-spacing:-0.8px;">0</span>
<span class="tx" id="t47" style="left:542.5px;top:603.80px;font-size:13px;line-height:15px;color:#d6d7dc;transform:scaleX(0.895);">Mic/Aux</span>
<span class="tx" id="t48" style="left:845.0px;top:603.80px;font-size:13px;line-height:15px;color:#d6d7dc;transform:scaleX(0.867);">0.0 dB</span>
<span class="tx" id="t49" style="left:540.7px;top:624.16px;font-size:9.5px;line-height:11.5px;color:#d8d8d8;letter-spacing:-0.8px;">-60</span>
<span class="tx" id="t50" style="left:568.3px;top:624.16px;font-size:9.5px;line-height:11.5px;color:#d8d8d8;letter-spacing:-0.8px;">-55</span>
<span class="tx" id="t51" style="left:595.9px;top:624.16px;font-size:9.5px;line-height:11.5px;color:#d8d8d8;letter-spacing:-0.8px;">-50</span>
<span class="tx" id="t52" style="left:623.5px;top:624.16px;font-size:9.5px;line-height:11.5px;color:#d8d8d8;letter-spacing:-0.8px;">-45</span>
<span class="tx" id="t53" style="left:651.1px;top:624.16px;font-size:9.5px;line-height:11.5px;color:#d8d8d8;letter-spacing:-0.8px;">-40</span>
<span class="tx" id="t54" style="left:678.7px;top:624.16px;font-size:9.5px;line-height:11.5px;color:#d8d8d8;letter-spacing:-0.8px;">-35</span>
<span class="tx" id="t55" style="left:706.2px;top:624.16px;font-size:9.5px;line-height:11.5px;color:#d8d8d8;letter-spacing:-0.8px;">-30</span>
<span class="tx" id="t56" style="left:733.8px;top:624.16px;font-size:9.5px;line-height:11.5px;color:#d8d8d8;letter-spacing:-0.8px;">-25</span>
<span class="tx" id="t57" style="left:761.4px;top:624.16px;font-size:9.5px;line-height:11.5px;color:#d8d8d8;letter-spacing:-0.8px;">-20</span>
<span class="tx" id="t58" style="left:789.0px;top:624.16px;font-size:9.5px;line-height:11.5px;color:#d8d8d8;letter-spacing:-0.8px;">-15</span>
<span class="tx" id="t59" style="left:816.6px;top:624.16px;font-size:9.5px;line-height:11.5px;color:#d8d8d8;letter-spacing:-0.8px;">-10</span>
<span class="tx" id="t60" style="left:846.4px;top:624.16px;font-size:9.5px;line-height:11.5px;color:#d8d8d8;letter-spacing:-0.8px;">-5</span>
<span class="tx" id="t61" style="left:872.9px;top:624.16px;font-size:9.5px;line-height:11.5px;color:#d8d8d8;letter-spacing:-0.8px;">0</span>
<span class="tx" id="t62" style="left:902.0px;top:543.80px;font-size:13px;line-height:15px;color:#dadbe0;transform:scaleX(0.860);">Fade</span>
<span class="tx" id="t63" style="left:891.5px;top:574.50px;font-size:13px;line-height:15px;color:#d4d4d8;transform:scaleX(0.922);">Duration</span>
<span class="tx" id="t64" style="left:950.0px;top:573.60px;font-size:13px;line-height:15px;color:#dadbe0;transform:scaleX(0.903);">300 ms</span>
<span class="tx" id="t65" style="left:1172.0px;top:546.85px;font-size:13px;line-height:15px;color:#dadbe0;transform:scaleX(0.902);">Start Streaming</span>
<span class="tx" id="t66" style="left:1172.0px;top:583.85px;font-size:13px;line-height:15px;color:#dadbe0;transform:scaleX(0.902);">Start Recording</span>
<span class="tx" id="t67" style="left:1179.2px;top:646.60px;font-size:13px;line-height:15px;color:#dadbe0;transform:scaleX(0.918);">Studio Mode</span>
<span class="tx" id="t68" style="left:1192.2px;top:676.10px;font-size:13px;line-height:15px;color:#dadbe0;transform:scaleX(0.873);">Settings</span>
<span class="tx" id="t69" style="left:1203.2px;top:705.60px;font-size:13px;line-height:15px;color:#dadbe0;transform:scaleX(0.877);">Exit</span>
<span class="tx" id="t70" style="left:1145.0px;top:617.10px;font-size:13px;line-height:15px;color:#dadbe0;transform:scaleX(0.910);">Start Virtual Camera</span>
<span class="tx" id="t71" style="left:931.3px;top:734.50px;font-size:13px;line-height:15px;color:#d8d8dc;transform:scaleX(0.842);">LIVE: 00:00:00</span>
<span class="tx" id="t72" style="left:1032.0px;top:734.50px;font-size:13px;line-height:15px;color:#d8d8dc;transform:scaleX(0.830);">REC: 00:00:00</span>
<span class="tx" id="t73" style="left:1126.2px;top:734.50px;font-size:13px;line-height:15px;color:#d8d8dc;transform:scaleX(0.854);">CPU: 0.8%, 60.00 fps</span>
</body></html>
